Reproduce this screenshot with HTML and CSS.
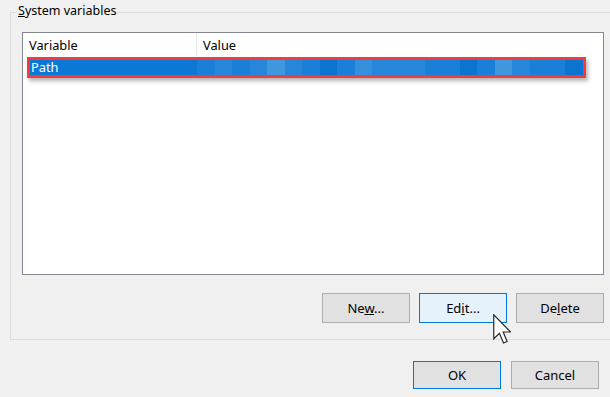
FILE: index.html
```html
<!DOCTYPE html>
<html>
<head>
<meta charset="utf-8">
<link rel="stylesheet" href="styles.css">
</head>
<body>
<div class="group">
  <span class="legend"><u>S</u>ystem variables</span>
  <div class="list">
    <div class="header">
      <div class="hcol var">Variable</div>
      <div class="hcol val">Value</div>
    </div>
    <div class="row selected">
      <div class="cell var">Path</div>
      <div class="cell blocks">
        <span class="b c2"></span><span class="b c3"></span><span class="b c2"></span><span class="b c3"></span><span class="b c5"></span><span class="b c3"></span><span class="b c2"></span><span class="b c1"></span><span class="b c2"></span><span class="b c4"></span><span class="b c3"></span><span class="b c3"></span><span class="b c3"></span><span class="b c2"></span><span class="b c2"></span><span class="b c1"></span><span class="b c2"></span><span class="b c5"></span><span class="b c3"></span><span class="b c2"></span><span class="b c2"></span><span class="b c1"></span>
      </div>
    </div>
  </div>
  <div class="btns">
    <button class="btn">Ne<u>w</u>...</button>
    <button class="btn hover">Ed<u>i</u>t...</button>
    <button class="btn">De<u>l</u>ete</button>
  </div>
</div>
<div class="footer">
  <button class="btn small default">OK</button>
  <button class="btn small">Cancel</button>
</div>
<svg class="cursor" viewBox="0 0 12 20" width="18" height="30">
  <path d="M0.5 0.5 L0.5 16.5 L4.3 12.8 L7 19.3 L9.4 18.3 L6.8 12 L11.8 12 Z" fill="#fff" stroke="#2a2a2a" stroke-width="0.8" stroke-linejoin="miter"/>
</svg>
</body>
</html>
```
FILE: styles.css
```css
html, body {
  margin: 0;
  padding: 0;
  width: 610px;
  height: 397px;
  overflow: hidden;
  background: #f0f0f0;
  font-family: "Noto Sans", "Segoe UI", sans-serif;
  font-size: 12.8px;
  color: #000;
}
body {
  position: relative;
}
.group {
  position: relative;
  margin: 12px 0 0 10px;
  width: 582px;
  border: 1px solid #dcdcdc;
  padding: 19px 11px 16px 11px;
}
.legend {
  position: absolute;
  left: 6px;
  top: -10px;
  padding: 0 1px;
  background: #f0f0f0;
  line-height: 16px;
  font-size: 12.5px;
}
.list {
  box-sizing: border-box;
  height: 243px;
  border: 1px solid #828790;
  background: #fff;
}
.header {
  display: flex;
  height: 23px;
  line-height: 24px;
}
.hcol {
  padding-left: 6px;
}
.hcol.var {
  width: 167px;
  border-right: 1px solid #e5e5e5;
}
.row {
  box-sizing: border-box;
  display: flex;
  margin: 1px 0 0 4px;
  width: 559px;
  height: 21px;
  border: 3px solid #f03c3c;
  background: #0a78d4;
  color: #fff;
  line-height: 15px;
  box-shadow: 2px 3px 4px rgba(0, 0, 0, 0.3);
}
.cell.var {
  width: 166px;
  padding-left: 1px;
}
.blocks {
  display: flex;
  flex: 1;
}
.b {
  width: 17.5px;
  height: 15px;
  flex: none;
}
.c1 { background: #0a74ce; }
.c2 { background: #1a7fd6; }
.c3 { background: #2686d9; }
.c4 { background: #3590dc; }
.c5 { background: #3f98de; }
.btns {
  display: flex;
  justify-content: flex-end;
  gap: 9px;
  margin-top: 18px;
}
.btn {
  box-sizing: border-box;
  width: 88px;
  height: 30px;
  border: 1px solid #adadad;
  background: #e1e1e1;
  font-family: "Noto Sans", "Segoe UI", sans-serif;
  font-size: 13px;
  color: #000;
  padding: 0;
  margin: 0;
}
.btn.hover {
  background: #e5f1fb;
  border-color: #0078d7;
}
.btn.small {
  height: 28px;
}
.btn.default {
  border-color: #0078d7;
}
.footer {
  display: flex;
  justify-content: flex-end;
  gap: 10px;
  margin-top: 21px;
  padding-right: 11px;
}
.cursor {
  position: absolute;
  left: 493px;
  top: 314px;
}
```
